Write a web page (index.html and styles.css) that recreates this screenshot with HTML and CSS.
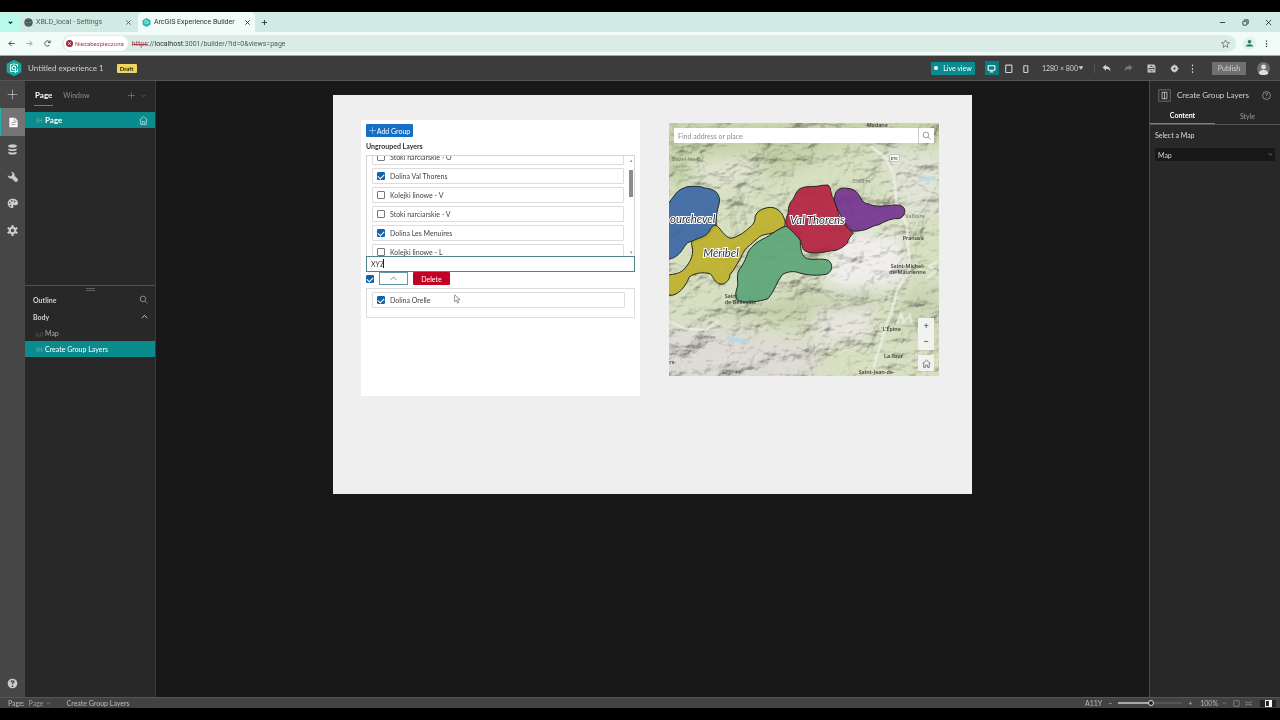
FILE: index.html
```html
<!DOCTYPE html>
<html lang="en">
<head>
    <meta charset="UTF-8">
    <meta name="viewport" content="width=device-width, initial-scale=1.0">
    <title>ArcGIS Experience Builder</title>
    <link rel="stylesheet" href="styles.css">
</head>
<body>
    <!-- browser -->
    <div class="tabs">
        <button class="tab-menu" aria-label="Search tabs"><svg class="icon-s" viewBox="0 0 16 16"><path d="M4 6l4 4 4-4" stroke-width="3"/></svg></button>
        <div class="tab">
            <svg class="icon" viewBox="0 0 16 16"><circle cx="8" cy="8" r="7" fill="#40534e"/><path d="M2 8h12M8 1c-4 4-4 10 0 14M8 1c4 4 4 10 0 14" stroke="#83938e"/></svg>
            <span>XBLD_local - Settings</span>
            <button aria-label="Close tab"><svg class="icon-s" viewBox="0 0 16 16"><path d="M3 3l10 10M13 3L3 13" stroke-width="2"/></svg></button>
        </div>
        <div class="tab active">
            <svg class="icon" viewBox="0 0 16 16"><path d="M8 0l7 4v8l-7 4-7-4V4z" fill="#28b8ae" stroke="none"/><path d="M5 5h5v5H5zM7 3v3M12 8H9" stroke="#dffffb"/></svg>
            <span>ArcGIS Experience Builder</span>
            <button aria-label="Close tab"><svg class="icon-s" viewBox="0 0 16 16"><path d="M3 3l10 10M13 3L3 13" stroke-width="2"/></svg></button>
        </div>
        <button class="new-tab" aria-label="New tab"><svg class="icon-s" viewBox="0 0 16 16"><path d="M8 2v12M2 8h12" stroke-width="2"/></svg></button>
        <div class="window-buttons">
            <button aria-label="Minimize"><svg class="icon-s" viewBox="0 0 16 16"><path d="M2 8h12" stroke-width="2"/></svg></button>
            <button aria-label="Restore"><svg class="icon-s" viewBox="0 0 16 16"><rect x="2" y="5" width="9" height="9" rx="1" stroke-width="2"/><path d="M5 3V2h9v9h-1" stroke-width="2"/></svg></button>
            <button aria-label="Close"><svg class="icon-s" viewBox="0 0 16 16"><path d="M2 2l12 12M14 2L2 14" stroke-width="2"/></svg></button>
        </div>
    </div>
    <div class="toolbar">
        <button aria-label="Back"><svg class="icon-s" viewBox="0 0 16 16"><path d="M15 8H2M8 2L2 8l6 6" stroke-width="2"/></svg></button>
        <button class="faded" aria-label="Forward"><svg class="icon-s" viewBox="0 0 16 16"><path d="M1 8h13M8 2l6 6-6 6" stroke-width="2"/></svg></button>
        <button aria-label="Reload"><svg class="icon-s" viewBox="0 0 16 16"><path d="M13 11a6 6 0 1 1 0-6M14 1v5H9" stroke-width="2"/></svg></button>
        <div class="address">
            <span class="unsafe"><svg class="icon-s" viewBox="0 0 16 16"><circle cx="8" cy="8" r="8" fill="#a52834" stroke="none"/><path d="M5 5l6 6M11 5l-6 6" stroke="#fff" stroke-width="2"/></svg>Niezabezpieczona</span>
            <span class="url"><s>https</s>://<b>localhost</b>:3001/builder/?id=0&amp;views=page</span>
            <button aria-label="Bookmark"><svg class="icon" viewBox="0 0 16 16"><path d="M8 2l2 4 5 1-4 3 1 5-4-3-4 3 1-5-4-3 5-1z"/></svg></button>
        </div>
        <button class="profile" aria-label="Profile"><svg class="icon-s" viewBox="0 0 16 16"><circle cx="8" cy="4" r="4" fill="#287866" stroke="none"/><path d="M0 15c0-7 16-7 16 0z" fill="#287866" stroke="none"/></svg></button>
        <button aria-label="Menu"><svg class="icon-s" viewBox="0 0 16 16"><path d="M8 1v3M8 7v3M8 13v3" stroke-width="3"/></svg></button>
    </div>

    <!-- builder header -->
    <header class="header">
        <svg class="logo" viewBox="0 0 32 32"><path d="M16 0l14 8v16l-14 8-14-8V8z" fill="#17a69d" stroke="#23c1b5"/><path d="M13 9H9v14h14v-6M19 9h4v4M9 16h4M16 6v7M13 13h6v6h-6zM19 26v-7" stroke="#d9fffb" stroke-width="2"/></svg>
        <h1>Untitled experience 1</h1>
        <span class="draft">Draft</span>
        <div class="tools">
            <button class="live"><i></i>Live view</button>
            <button class="device on" aria-label="Desktop"><svg class="icon" viewBox="0 0 16 16"><rect x="2" y="3" width="12" height="8" rx="1" stroke-width="2"/><path d="M5 14h6" stroke-width="2"/></svg></button>
            <button class="device" aria-label="Tablet"><svg class="icon" viewBox="0 0 16 16"><rect x="3" y="2" width="11" height="13" rx="1" stroke-width="2"/></svg></button>
            <button class="device" aria-label="Phone"><svg class="icon" viewBox="0 0 16 16"><rect x="5" y="3" width="7" height="12" rx="1" stroke-width="2"/></svg></button>
            <button class="size">1280 × 800<svg viewBox="0 0 8 8"><path d="M0 1h8L4 7z"/></svg></button>
            <button class="undo" aria-label="Undo"><svg class="icon" viewBox="0 0 16 16"><path d="M1 6l6-5v3c5 0 8 3 8 9-2-3-4-4-8-4v3z" fill="currentColor" stroke="none"/></svg></button>
            <button class="redo" aria-label="Redo"><svg class="icon" viewBox="0 0 16 16"><path d="M15 6L9 1v3c-5 0-8 3-8 9 2-3 4-4 8-4v3z" fill="currentColor" stroke="none"/></svg></button>
            <button class="tool" aria-label="Save"><svg class="icon" viewBox="0 0 16 16"><path d="M2 2h10l2 2v10H2zM4 2v4h7V2M5 14v-4h6v4" stroke-width="2"/></svg></button>
            <button class="tool" aria-label="Lock layout"><svg class="icon" viewBox="0 0 16 16"><circle cx="8" cy="8" r="4" stroke-width="4"/><path d="M8 1v2M8 13v2M1 8h2M13 8h2" stroke-width="2"/></svg></button>
            <button class="more" aria-label="More"><svg class="icon" viewBox="0 0 16 16"><path d="M8 1v3M8 7v3M8 13v3" stroke-width="2"/></svg></button>
            <button class="publish">Publish</button>
            <svg class="avatar" viewBox="0 0 16 16"><circle cx="8" cy="8" r="8" fill="#6f6f6f" stroke="none"/><circle cx="8" cy="6" r="3" fill="#ddd" stroke="none"/><path d="M2 14c1-6 11-6 12 0-3 3-9 3-12 0z" fill="#ddd" stroke="none"/></svg>
        </div>
    </header>

    <main class="main">
        <nav class="rail">
            <button aria-label="Insert"><svg viewBox="0 0 16 16"><path d="M8 1v14M1 8h14"/></svg></button>
            <button class="active" aria-label="Page"><svg viewBox="0 0 16 16"><path d="M2 1h8l4 4v10H2z" fill="currentColor" stroke="none"/><path d="M5 8h6M5 11h6M9 2v4h4" stroke="#777"/></svg></button>
            <button aria-label="Data"><svg viewBox="0 0 16 16"><ellipse cx="8" cy="3" rx="6" ry="2" fill="currentColor"/><path d="M2 6v2c0 3 12 3 12 0V6c-1 2-11 2-12 0zM2 11v2c0 3 12 3 12 0v-2c-1 2-11 2-12 0z" fill="currentColor" stroke="none"/></svg></button>
            <button aria-label="Utilities"><svg viewBox="0 0 16 16"><path d="M6 1a5 5 0 0 1 5 6l4 4a2 2 0 0 1-4 4l-4-4a5 5 0 0 1-6-5l3 2 3-1 1-3z" fill="currentColor" stroke="none"/></svg></button>
            <button aria-label="Theme"><svg viewBox="0 0 16 16"><path d="M8 1c5 0 8 3 8 6 0 4-3 4-6 3-2 0 0 3-1 4-2 2-8-1-8-6 0-4 3-7 7-7z" fill="currentColor" stroke="none"/><path d="M4 6v2M7 3v2M11 4v2M5 10v2" stroke="#464646" stroke-width="2"/></svg></button>
            <button aria-label="Settings"><svg viewBox="0 0 16 16"><circle cx="8" cy="8" r="4" stroke-width="3"/><path d="M8 0v3M8 13v3M1 4l3 2M12 10l3 2M15 4l-3 2M4 10l-3 2" stroke-width="3"/></svg></button>
            <button class="help" aria-label="Help"><svg viewBox="0 0 16 16"><circle cx="8" cy="8" r="7" fill="currentColor" stroke="none"/><path d="M6 6c0-3 5-2 4 0-1 1-2 1-2 3M8 11v2" stroke="#464646" stroke-width="2"/></svg></button>
        </nav>

        <aside class="left">
            <section class="pages">
                <div class="page-tabs">
                    <button class="active">Page</button>
                    <button>Window</button>
                    <button class="add" aria-label="Add page"><svg class="icon" viewBox="0 0 16 16"><path d="M8 2v12M2 8h12"/></svg></button>
                    <button aria-label="Page options"><svg class="icon-s" viewBox="0 0 16 16"><path d="M4 7l4 3 4-3"/></svg></button>
                </div>
                <a class="row selected" href="#"><svg class="icon-s" viewBox="0 0 16 16"><path d="M2 2v12M6 2v12M13 2v12M6 8h7"/></svg><b>Page</b><svg class="icon home" viewBox="0 0 16 16"><path d="M1 7l7-6 7 6M3 6v9h10V6M6 14v-4h4v4"/></svg></a>
            </section>
            <section class="outline">
                <div class="grip"></div>
                <h2>Outline <svg class="icon" viewBox="0 0 16 16"><circle cx="7" cy="7" r="5"/><path d="M11 11l4 4"/></svg></h2>
                <h2>Body <svg class="icon-s" viewBox="0 0 16 16"><path d="M2 12l6-7 6 7" stroke-width="2"/></svg></h2>
                <a class="row" href="#"><svg class="icon-s" viewBox="0 0 16 16"><path d="M1 4v10h14V4M5 7v7M10 5v9"/></svg>Map</a>
                <a class="row selected" href="#"><svg class="icon-s" viewBox="0 0 16 16"><path d="M2 2v12M6 2v12M13 2v12M6 8h7"/></svg>Create Group Layers</a>
            </section>
        </aside>

        <div class="stage">
            <div class="canvas">
                <section class="group-widget">
                    <button class="add-group"><svg viewBox="0 0 16 16"><path d="M8 0v16M0 8h16"/></svg>Add Group</button>
                    <h3>Ungrouped Layers</h3>
                    <div class="list">
                        <div class="items">
                            <label class="layer"><input type="checkbox">Stoki narciarskie - O</label>
                            <label class="layer"><input type="checkbox" checked>Dolina Val Thorens</label>
                            <label class="layer"><input type="checkbox">Kolejki linowe - V</label>
                            <label class="layer"><input type="checkbox">Stoki narciarskie - V</label>
                            <label class="layer"><input type="checkbox" checked>Dolina Les Menuires</label>
                            <label class="layer"><input type="checkbox">Kolejki linowe - L</label>
                        </div>
                        <div class="scrollbar"><span>▴</span><i></i><span>▾</span></div>
                    </div>
                    <div class="name-field">
                        <input type="text" value="XYZ" aria-label="Group name">
                        <i class="caret"></i>
                    </div>
                    <div class="group-actions">
                        <input type="checkbox" checked aria-label="Group visible">
                        <button class="collapse" aria-label="Collapse"><svg class="icon-s" viewBox="0 0 16 16"><path d="M1 11l7-6 7 6" stroke-width="2"/></svg></button>
                        <button class="delete">Delete</button>
                    </div>
                    <div class="group">
                        <label class="layer"><input type="checkbox" checked>Dolina Orelle</label>
                        <svg class="cursor" viewBox="0 0 10 16"><path d="M1 1v12l3-3 2 5 2-1-2-5h4z" fill="#fff" stroke="#555"/></svg>
                    </div>
                </section>

                <section class="map">
                    <svg class="terrain" viewBox="15 15 810 759" preserveAspectRatio="xMidYMid slice">
                        <defs>
                            <filter id="relief" x="0" y="0" width="100%" height="100%">
                                <feTurbulence type="fractalNoise" baseFrequency="0.009 0.012" numOctaves="5" seed="12"/>
                                <feColorMatrix values="0 0 0 0 0  0 0 0 0 0  0 0 0 0 0  1 0 0 0 0"/>
                                <feDiffuseLighting surfaceScale="60" diffuseConstant="1.25" lighting-color="#fff">
                                    <feDistantLight azimuth="235" elevation="58"/>
                                </feDiffuseLighting>
                            </filter>
                            <filter id="soft"><feGaussianBlur stdDeviation="22"/></filter>
                        </defs>
                        <rect x="0" y="0" width="840" height="790" fill="#d8e0c2"/>
                        <g filter="url(#soft)">
                            <path d="M0 0h840v80H560L330 180 0 200z" fill="#c4d2a8"/>
                            <path d="M60 130l210-20 40 60-180 40z" fill="#e2e5d1"/>
                            <path d="M520 340l190 10 20 130-130 60-120-50z" fill="#f1efec"/>
                            <path d="M650 90l190 20v180H720z" fill="#e1e4d6"/>
                            <path d="M0 620l260 20 200 40v110H0z" fill="#dfdbd6"/>
                            <path d="M140 570l250-30 250-30v50l-260 60z" fill="#c4cfaa"/>
                            <path d="M720 500h120v150H720z" fill="#ccd4b5"/>
                            <path d="M450 580l180-20-20 110-160 10z" fill="#e8e7df"/>
                        </g>
                        <rect class="relief" x="0" y="0" width="840" height="790" filter="url(#relief)"/>
                        <g class="valleys">
                            <path d="M620 85l45 35 25 50 8 90 30 60 10 130-40 70-15 60-25 70-30 100" stroke-width="9"/>
                            <path d="M15 610l50 22 60 4 40-28M700 615l12-28 6 28 20-25 4 25M790 480l25-20-20-15 25-15" stroke-width="7"/>
                        </g>
                        <path class="water" d="M765 185l50-5M190 660l60 12"/>
                        <g class="areas">
                            <path fill="#3c68a5" d="M0 268c25-18 32-50 60-58 15-8 35-4 50-4 14 8 27 3 37 10 18 8 22 28 18 42-6 20-10 40-8 68-8 10-18 15-24 28-20 16-45 12-62 20-20 20-22 48-71 52z"/>
                            <path fill="#beb22e" d="M0 472c25-2 45-4 58-16 14-14 28-35 28-58 0-12-6-20-2-28 20-12 45-12 54-34 5-10 12-16 20-13 13 10 24 34 42 38 18-3 38-16 48-25 16-14 26-20 25-39 5-18 25-28 47-29 22 1 37 18 42 39 7 18-9 27-26 34-18 8-42 7-53 18l-27 24c-12 8-18 19-27 39-12 18-18 34-31 47-1 18-14 30-27 29-20-2-21-21-33-31-22-5-44-3-62 10-10 25-32 58-61 55z"/>
                            <path fill="#5da678" d="M248 415c6-26 32-45 57-56 22-12 48-38 70-34 20 6 35 28 34 50 2 22 3 40 21 47 22 5 46-3 64 6 16 13 10 35-8 41-22 4-56 4-82-5-16-6-35-3-49 6-17 19-23 50-43 72-28 10-66 12-85 9-20-10-10-32-6-48 1-18-5-36 7-51 9-13 14-23 20-37z"/>
                            <path fill="#b52442" d="M386 245c8-12 10-27 24-34 20-9 45-3 63-9l19-1c10 7 7 24 13 35 9 12 15 30 17 48 2 18 20 30 32 38 7 8 9 16 14 24-8 8-15 17-18 29-12 12-29 24-47 23-24 5-60 12-79 1-14-9-7-24-17-35-11-13-27-30-39-39-7-17 1-29 5-42-1-16 4-29 13-38z"/>
                            <path fill="#753591" d="M515 225c4-13 20-16 34-14 15 0 26 7 33 16 10 14 15 30 30 30 22 11 43 7 60 6 17-3 42-5 49 9 5 14-5 29-19 30-18-2-38 8-58 18-20 2-33 16-49 17-17 3-36 6-46-9-7-17-19-30-25-49-9-16-19-34-9-54z"/>
                        </g>
                        <g class="places">
                            <text x="608" y="28">Modane</text>
                            <rect x="677" y="110" width="29" height="20" rx="3" fill="#fff" stroke="#777"/>
                            <text class="road" x="680" y="125">E70</text>
                            <text class="dim" x="24" y="130">Bozel-les-B</text>
                            <text class="dim" x="564" y="195">3560 m</text>
                            <text class="dim" x="724" y="299">Valloire</text>
                            <text x="716" y="366">Pranova</text>
                            <text x="680" y="449">Saint-Michel-</text>
                            <text x="676" y="468">de-Maurienne</text>
                            <text x="182" y="539">Saint</text>
                            <text x="182" y="557">de-Belleville</text>
                            <text x="656" y="638">L'Épine</text>
                            <text class="dim" x="94" y="662">Jeannes</text>
                            <text x="660" y="720">La Tour</text>
                            <text x="16" y="737">rs-</text>
                            <text class="dim" x="174" y="767">2751 m</text>
                            <text x="584" y="767">Saint-Jean-de-</text>
                        </g>
                        <g class="valley-names">
                            <text x="18" y="316">ourchevel</text>
                            <text x="118" y="416">Méribel</text>
                            <text x="378" y="319">Val Thorens</text>
                        </g>
                    </svg>
                    <form class="search">
                        <input type="text" placeholder="Find address or place" aria-label="Find address or place">
                        <button type="button" aria-label="Search"><svg class="icon" viewBox="0 0 16 16"><circle cx="7" cy="7" r="5"/><path d="M11 11l4 4"/></svg></button>
                    </form>
                    <div class="map-buttons">
                        <button aria-label="Zoom in">+</button>
                        <button aria-label="Zoom out">−</button>
                        <button class="home-btn" aria-label="Default view"><svg class="icon" viewBox="0 0 16 16"><path d="M1 8l7-6 7 6M3 7v8h3v-4h4v4h3V7"/></svg></button>
                    </div>
                </section>
            </div>
        </div>

        <aside class="right">
            <div class="widget-title">
                <svg viewBox="0 0 16 16"><rect x="1" y="1" width="14" height="14" stroke="#777"/><path d="M5 4v8M8 4v8M11 4v8M5 4h6M5 12h6"/></svg>
                <h2>Create Group Layers</h2>
                <svg class="icon" viewBox="0 0 16 16"><circle cx="8" cy="8" r="7"/><path d="M6 6c0-3 5-2 4 0-1 1-2 1-2 3M8 11v1"/></svg>
            </div>
            <div class="widget-tabs">
                <button class="active">Content</button>
                <button>Style</button>
            </div>
            <div class="setting">
                <label for="map">Select a Map</label>
                <div class="select">
                    <select id="map"><option>Map</option></select>
                    <svg class="icon-s" viewBox="0 0 16 16"><path d="M4 6l4 3 4-3"/></svg>
                </div>
            </div>
        </aside>
    </main>

    <footer class="footer">
        <label for="page">Page:</label>
        <select id="page"><option>Page</option></select>
        <svg class="icon-s" viewBox="0 0 16 16"><path d="M4 6l4 3 4-3"/></svg>
        <span class="crumb">Create Group Layers</span>
        <div class="zoom">
            <span>A11Y</span>
            <button aria-label="Zoom out">−</button>
            <input type="range" min="0" max="100" value="52" aria-label="Zoom">
            <button aria-label="Zoom in">+</button>
            <span class="percent">100%</span>
            <svg class="icon-s" viewBox="0 0 16 16"><path d="M4 6l4 3 4-3"/></svg>
            <svg class="icon-s fit" viewBox="0 0 16 16"><rect x="2" y="2" width="12" height="12"/></svg>
            <svg class="icon-s fit" viewBox="0 0 16 16"><path d="M2 2v4h12V2M2 14v-4h12v4"/></svg>
            <button class="side" aria-label="Toggle panel"><svg class="icon-s" viewBox="0 0 16 16"><rect x="1" y="1" width="14" height="14" stroke="#fff" stroke-width="2"/><path d="M9 1h6v14H9z" fill="#fff" stroke="none"/></svg></button>
        </div>
    </footer>
</body>
</html>
```
FILE: styles.css
```css
* {
    box-sizing: border-box;
}
body {
    display: flex;
    flex-direction: column;
    height: 100vh;
    margin: 0;
    padding: 12px 0;
    background: #000;
    color: #d0d0d0;
    font-family: Lato, sans-serif;
    font-size: 8px;
    line-height: 12px;
    overflow: hidden;
}
button, input, select {
    margin: 0;
    padding: 0;
    border: 0;
    background: none;
    color: inherit;
    font: inherit;
}
button {
    display: flex;
    align-items: center;
    justify-content: center;
}
h1, h2, h3 {
    margin: 0;
    font-size: inherit;
    font-weight: normal;
}
a {
    color: inherit;
    text-decoration: none;
}
svg {
    flex: none;
    fill: none;
    stroke: currentColor;
}
.icon {
    width: 9px;
    height: 9px;
}
.icon-s {
    width: 7px;
    height: 7px;
}

/* browser */
.tabs {
    display: flex;
    align-items: center;
    flex: none;
    height: 20px;
    background: #d0ebe3;
    color: #26352f;
    font-family: Roboto, sans-serif;
    font-size: 7px;
}
.tab-menu {
    width: 20px;
    height: 18px;
    background: #b8fbea;
}
.tab {
    display: flex;
    align-items: center;
    gap: 3px;
    width: 118px;
    height: 20px;
    padding: 0 6px 0 4px;
    color: #4d605a;
}
.tab span {
    flex: 1;
    white-space: nowrap;
}
.tab.active {
    width: 117px;
    padding-right: 4px;
    border-radius: 5px 5px 0 0;
    background: #f1fcf8;
    color: #26352f;
}
.new-tab {
    width: 18px;
}
.window-buttons {
    display: flex;
    gap: 16px;
    margin-left: auto;
    padding-right: 8px;
}
.toolbar {
    display: flex;
    align-items: center;
    flex: none;
    gap: 11px;
    height: 24px;
    padding: 0 10px 0 8px;
    border-bottom: 1px solid #9fa9a5;
    background: #f1fcf8;
    color: #33423d;
    font-family: Roboto, sans-serif;
    font-size: 7px;
}
.faded {
    opacity: 0.5;
}
.address {
    display: flex;
    align-items: center;
    flex: 1;
    height: 17px;
    padding: 0 6px 0 2px;
    border-radius: 9px;
    background: #dcede7;
}
.unsafe {
    display: flex;
    align-items: center;
    gap: 2px;
    height: 15px;
    padding: 0 4px 0 2px;
    border-radius: 8px;
    background: #fff;
    color: #a3434a;
    font-size: 6px;
}
.url {
    flex: 1;
    margin-left: 4px;
    color: #4c5c56;
}
.url s {
    color: #a3434a;
}
.url b {
    color: #26352f;
    font-weight: normal;
}
.profile {
    width: 13px;
    height: 13px;
    margin: 0 -4px;
    border-radius: 7px;
    background: #dff3ec;
}

/* builder header */
.header {
    display: flex;
    align-items: center;
    flex: none;
    height: 25px;
    padding: 0 10px 0 6px;
    border-bottom: 1px solid #555;
    background: #3c3c3c;
}
.logo {
    width: 16px;
    height: 16px;
}
.header h1 {
    margin-left: 6px;
}
.draft {
    margin-left: 13px;
    padding: 0 3px;
    border-radius: 1px;
    background: #efd65c;
    color: #29260f;
    font-size: 6px;
    font-weight: bold;
    line-height: 9px;
}
.tools {
    display: flex;
    align-items: center;
    margin-left: auto;
}
.live {
    gap: 5px;
    width: 44px;
    height: 13px;
    margin-right: 10px;
    border-radius: 1px;
    background: #088c8f;
    color: #fff;
    font-size: 7px;
}
.live i {
    width: 4px;
    height: 4px;
    border-radius: 2px;
    background: #fff;
}
.device {
    width: 14px;
    height: 14px;
    margin-right: 3px;
}
.device.on {
    background: #087e81;
    color: #fff;
}
.size {
    gap: 1px;
    margin: 0 11px 0 6px;
    font-size: 7px;
}
.size svg {
    width: 4px;
    height: 4px;
    fill: currentColor;
}
.undo, .redo, .tool, .more {
    width: 23px;
}
.undo {
    border-left: 1px solid #555;
}
.redo {
    color: #777;
}
.more {
    width: 13px;
}
.publish {
    width: 34px;
    height: 13px;
    margin: 0 11px 0 13px;
    background: #707070;
    font-size: 7px;
}
.avatar {
    width: 13px;
    height: 13px;
}

.main {
    display: flex;
    flex: 1;
    min-height: 0;
    background: #181818;
}
.rail {
    display: flex;
    flex-direction: column;
    flex: none;
    width: 25px;
    background: #464646;
    color: #ccc;
}
.rail button {
    height: 27px;
}
.rail .active {
    height: 28px;
    border-left: 1px solid #22b5ae;
    background: #747474;
    color: #fff;
}
.rail svg {
    width: 11px;
    height: 11px;
}
.rail .help {
    margin-top: auto;
}

/* left panel */
.left {
    display: flex;
    flex-direction: column;
    flex: none;
    width: 131px;
    border-right: 1px solid #3b3b3b;
    background: #282828;
    font-size: 7px;
}
.pages {
    height: 204px;
}
.page-tabs {
    display: flex;
    gap: 9px;
    height: 25px;
    margin-bottom: 6px;
    padding: 3px 7px 0 9px;
    color: #8d8d8d;
}
.page-tabs button {
    height: 22px;
    padding: 0 1px;
}
.page-tabs .active {
    border-bottom: 1px solid #0da79f;
    color: #fff;
    font-size: 8px;
    font-weight: bold;
}
.page-tabs .add {
    margin: 0 -7px 0 auto;
}
.row {
    display: flex;
    align-items: center;
    gap: 2px;
    height: 16px;
    padding: 0 7px 0 11px;
    color: #aaa;
}
.row.selected {
    background: #0a8b8e;
    color: #fff;
}
.row b {
    font-size: 8px;
}
.row .icon-s {
    opacity: 0.5;
}
.row .home {
    margin-left: auto;
}
.outline {
    flex: 1;
    border-top: 1px solid #505050;
}
.grip {
    width: 9px;
    height: 3px;
    margin: 2px auto 0;
    border: 1px solid #606060;
    border-width: 1px 0;
}
.outline h2 {
    display: flex;
    align-items: center;
    justify-content: space-between;
    height: 17px;
    padding: 0 7px 0 8px;
    font-weight: bold;
}

/* canvas */
.stage {
    flex: 1;
    min-width: 0;
    padding: 14px 177px;
}
.canvas {
    display: grid;
    grid-template-columns: 279fr 270fr;
    align-items: start;
    gap: 29px;
    aspect-ratio: 16 / 10;
    padding: 25px 33px 0 28px;
    background: #efefef;
}
.group-widget {
    min-height: 276px;
    padding: 4px 5px 0;
    background: #fff;
    color: #444;
}
.add-group {
    gap: 1px;
    width: 47px;
    height: 13px;
    border-radius: 1px;
    background: #156fc7;
    color: #fff;
    font-size: 7px;
}
.add-group svg {
    width: 7px;
    height: 7px;
}
.group-widget h3 {
    margin-top: 3px;
    color: #333;
    font-size: 7px;
    font-weight: bold;
}
.list {
    display: flex;
    height: 101px;
    margin-top: 3px;
    border: 1px solid #d5d5d5;
    border-bottom: 0;
    overflow: hidden;
}
.items {
    flex: 1;
    margin-top: -7px;
    padding-left: 5px;
}
.layer {
    display: flex;
    align-items: center;
    gap: 5px;
    height: 16px;
    margin-bottom: 3px;
    padding: 0 4px;
    border: 1px solid #ddd;
    border-radius: 1px;
    font-size: 7px;
}
input[type="checkbox"] {
    appearance: none;
    flex: none;
    width: 8px;
    height: 8px;
    border: 1px solid #777;
    border-radius: 1px;
    background: #fff;
}
input[type="checkbox"]:checked {
    border-color: #1262ac;
    background: #1262ac;
}
input[type="checkbox"]:checked::before {
    content: "";
    display: block;
    width: 5px;
    height: 3px;
    border: solid #fff;
    border-width: 0 0 1px 1px;
    transform: translateY(1px) rotate(-45deg);
}
.scrollbar {
    display: flex;
    flex-direction: column;
    align-items: center;
    width: 6px;
    margin-left: 4px;
    color: #999;
    font-size: 5px;
    line-height: 8px;
}
.scrollbar i {
    width: 4px;
    height: 27px;
    margin: 6px 0 auto;
    background: #8c8c8c;
}
.name-field {
    position: relative;
}
.name-field input {
    display: block;
    width: 100%;
    height: 16px;
    padding: 0 4px 1px;
    border: 1px solid #54808d;
    color: #333;
    font-size: 7px;
}
.caret {
    position: absolute;
    top: 3px;
    left: 17px;
    width: 1px;
    height: 9px;
    background: #222;
}
.group-actions {
    display: flex;
    align-items: center;
    gap: 5px;
    height: 13px;
}
.collapse {
    width: 29px;
    height: 13px;
    border: 1px solid #6694a9;
    color: #52829b;
}
.delete {
    width: 37px;
    height: 13px;
    border-radius: 1px;
    background: #c40022;
    color: #fff;
    font-size: 7px;
}
.group {
    position: relative;
    height: 30px;
    margin-top: 3px;
    padding: 3px 9px 0 5px;
    border: 1px solid #ddd;
}
.cursor {
    position: absolute;
    top: 5px;
    left: 87px;
    width: 6px;
    height: 10px;
}

/* map */
.map {
    position: relative;
    margin-top: 3px;
    aspect-ratio: 270 / 253;
}
.terrain {
    position: absolute;
    width: 100%;
    height: 100%;
}
.relief {
    mix-blend-mode: multiply;
    opacity: 0.33;
}
.valleys {
    stroke: #f4f4ee;
    stroke-linejoin: round;
    opacity: 0.6;
}
.water {
    stroke: #a9dce8;
    stroke-width: 12;
    opacity: 0.7;
}
.areas {
    stroke: #202923;
    stroke-width: 3;
    fill-opacity: 0.93;
}
.places {
    stroke: none;
    fill: #3f423e;
    font-family: "Noto Sans", sans-serif;
    font-size: 16px;
    font-weight: 600;
}
.places .road {
    font-size: 12px;
}
.places .dim {
    opacity: 0.55;
}
.valley-names {
    fill: #30323a;
    stroke: #fff;
    stroke-width: 6px;
    paint-order: stroke;
    font-size: 34px;
    font-style: italic;
}
.search {
    position: relative;
    top: 5px;
    display: flex;
    height: 15px;
    margin: 0 5px;
    background: #fff;
    color: #555;
}
.search input {
    flex: 1;
    min-width: 0;
    padding: 0 4px;
    font-size: 7px;
}
.search input::placeholder {
    color: #8d8d8d;
}
.search button {
    width: 16px;
    border-left: 1px solid #ccc;
}
.map-buttons {
    position: absolute;
    right: 5px;
    bottom: 5px;
}
.map-buttons button {
    width: 16px;
    height: 16px;
    background: #f2f2f0;
    color: #333;
    font-size: 9px;
}
.map-buttons .home-btn {
    margin-top: 5px;
}

/* right panel */
.right {
    flex: none;
    width: 131px;
    border-left: 1px solid #4c4c4c;
    background: #282828;
}
.widget-title {
    display: flex;
    align-items: center;
    gap: 6px;
    height: 26px;
    padding: 2px 9px 0 8px;
}
.widget-title > svg:first-child {
    width: 13px;
    height: 13px;
}
.widget-title h2 {
    flex: 1;
    white-space: nowrap;
}
.widget-tabs {
    display: flex;
    border-bottom: 1px solid #555;
    color: #999;
}
.widget-tabs button {
    flex: 1;
    height: 17px;
    font-size: 7px;
}
.widget-tabs .active {
    margin-bottom: -1px;
    border-bottom: 1px solid #0bb0a6;
    color: #fff;
    font-weight: bold;
}
.setting {
    padding: 4px 5px;
    font-size: 7px;
}
.setting label {
    color: #ddd;
}
.select {
    display: flex;
    align-items: center;
    height: 13px;
    margin-top: 7px;
    padding: 0 1px 0 3px;
    background: #181818;
}
select {
    appearance: none;
}
.select select {
    flex: 1;
}

/* footer */
.footer {
    display: flex;
    align-items: center;
    flex: none;
    height: 11px;
    padding: 0 4px 0 8px;
    border-top: 1px solid #555;
    background: #424242;
    color: #bbb;
    font-size: 7px;
    line-height: 10px;
}
.footer select {
    margin: 0 1px 0 4px;
    color: #999;
}
.crumb {
    margin-left: 15px;
}
.zoom {
    display: flex;
    align-items: center;
    margin-left: auto;
}
.zoom button {
    width: 16px;
}
.zoom input {
    appearance: none;
    width: 64px;
    height: 2px;
    background: linear-gradient(to right, #aaa 52%, #565656 52%);
}
.zoom input::-webkit-slider-thumb {
    appearance: none;
    width: 6px;
    height: 6px;
    border: 1px solid #ddd;
    border-radius: 50%;
    background: #222;
}
.percent {
    margin: 0 3px 0 2px;
}
.fit {
    margin-left: 5px;
}
.zoom .side {
    margin-left: 8px;
    background: #222;
}
```
